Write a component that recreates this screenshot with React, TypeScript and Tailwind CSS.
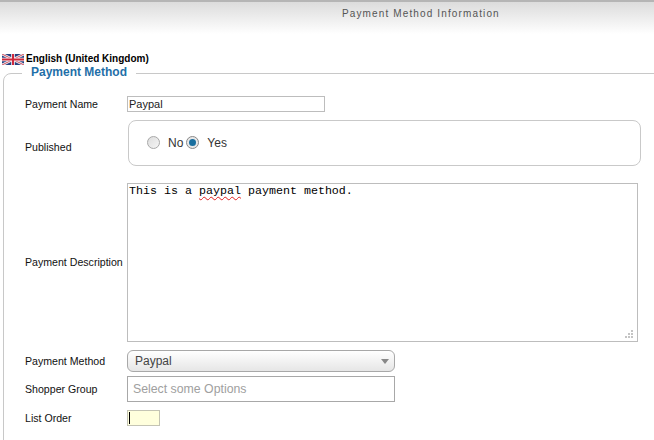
import React from "react";

function Flag() {
  return (
    <svg width="22" height="11" viewBox="0 0 22 11" className="block">
      <rect width="22" height="11" fill="#27407f" />
      <path d="M0 0L22 11M22 0L0 11" stroke="#f2f2f4" strokeWidth="2.6" />
      <path d="M0 0L22 11M22 0L0 11" stroke="#c8344a" strokeWidth="0.9" />
      <path d="M11 0V11M0 5.5H22" stroke="#f4f4f6" strokeWidth="3.6" />
      <path d="M11 0V11M0 5.5H22" stroke="#d0283c" strokeWidth="2" />
    </svg>
  );
}

function Row({ label, className, labelClassName, children }: { label: string; className?: string; labelClassName?: string; children: React.ReactNode }) {
  return (
    <div className={"flex items-center " + (className ?? "")}>
      <div className={"w-[102px] shrink-0 text-[10.6px] leading-[14px] text-[#111] " + (labelClassName ?? "")}>{label}</div>
      {children}
    </div>
  );
}

export default function App() {
  return (
    <div className="w-[654px] h-[440px] overflow-hidden bg-white font-['Liberation_Sans',Arial,sans-serif]">
      <header className="h-[34px] border-t-[2px] border-[#b5b5b5] bg-gradient-to-b from-[#dcdcdc] to-white pl-[342px] pt-[5px]">
        <h1 className="text-[10px] leading-[14px] tracking-[1.13px] text-[#555] font-normal">Payment Method Information</h1>
      </header>

      <div className="mt-[17px] h-[16px] flex items-center pl-[2px] gap-[2px]">
        <Flag />
        <span className="text-[10px] leading-[14px] font-bold text-black">English (United Kingdom)</span>
      </div>

      <fieldset className="ml-[3px] mt-[-3px] w-[670px] h-[400px] border border-[#c8c8c8] rounded-[8px] min-w-0">
        <legend className="ml-[18px] px-[9px] pb-[2px] text-[12px] leading-[16px] font-bold text-[#1f6fa8]">Payment Method</legend>

        <div className="pl-[21px] pt-[13px] flex flex-col">
          <Row label="Payment Name" className="h-[17px]">
            <div className="w-[198px] h-[16px] border border-[#bdbdbd] pl-[1px] text-[11px] leading-[14px] text-[#222]">Paypal</div>
          </Row>

          <Row label="Published" className="mt-[8px]" labelClassName="mt-[8px]">
            <div className="ml-px w-[513px] h-[46px] border border-[#c9c9c9] rounded-[8px] flex items-center pl-[18px] pb-[1px] text-[12px] text-[#333]">
              <span className="w-[13px] h-[13px] rounded-full border border-[#a8a8a8] bg-gradient-to-br from-[#ddd] to-[#f5f5f5]" />
              <span className="ml-[8px]">No</span>
              <span className="ml-[3px] w-[13px] h-[13px] rounded-full border border-[#8a8a8a] bg-[#e8e8e8] flex items-center justify-center">
                <span className="w-[7px] h-[7px] rounded-full bg-[#1a6f9f]" />
              </span>
              <span className="ml-[8px]">Yes</span>
            </div>
          </Row>

          <Row label="Payment Description" className="mt-[17px]" labelClassName="mb-[2px]">
            <div className="relative w-[511px] h-[159px] border border-[#bdbdbd] pl-[1px] pt-[1px] font-['Liberation_Mono',monospace] text-[11.67px] leading-[13px] text-black">
              This is a <span className="underline decoration-wavy decoration-[#e02020] decoration-1 underline-offset-2">paypal</span> payment method.
              <svg width="8" height="8" viewBox="0 0 8 8" className="absolute right-[4px] bottom-[3px]" fill="#c4c4c4">
                <rect x="6" y="0" width="2" height="2" />
                <rect x="3" y="3" width="2" height="2" />
                <rect x="6" y="3" width="2" height="2" />
                <rect x="0" y="6" width="2" height="2" />
                <rect x="3" y="6" width="2" height="2" />
                <rect x="6" y="6" width="2" height="2" />
              </svg>
            </div>
          </Row>

          <Row label="Payment Method" className="mt-[8px]">
            <div className="w-[268px] h-[22px] border border-[#a8a8a8] rounded-[6px] bg-gradient-to-b from-white to-[#e6e6e6] flex items-center justify-between pl-[7px] pr-[5px] text-[12px] text-[#444]">
              <span>Paypal</span>
              <span className="w-0 h-0 border-x-[4px] border-x-transparent border-t-[5px] border-t-[#888]" />
            </div>
          </Row>

          <Row label="Shopper Group" className="mt-[4px]">
            <div className="w-[268px] h-[26px] border border-[#a8a8a8] flex items-center pl-[5px] text-[12.3px] text-[#a0a0a0]">Select some Options</div>
          </Row>

          <Row label="List Order" className="mt-[8px]">
            <div className="w-[33px] h-[16px] border border-[#c4c4b4] bg-[#ffffdd] flex items-center pl-[1px]">
              <span className="w-px h-[12px] bg-black" />
            </div>
          </Row>
        </div>
      </fieldset>
    </div>
  );
}
